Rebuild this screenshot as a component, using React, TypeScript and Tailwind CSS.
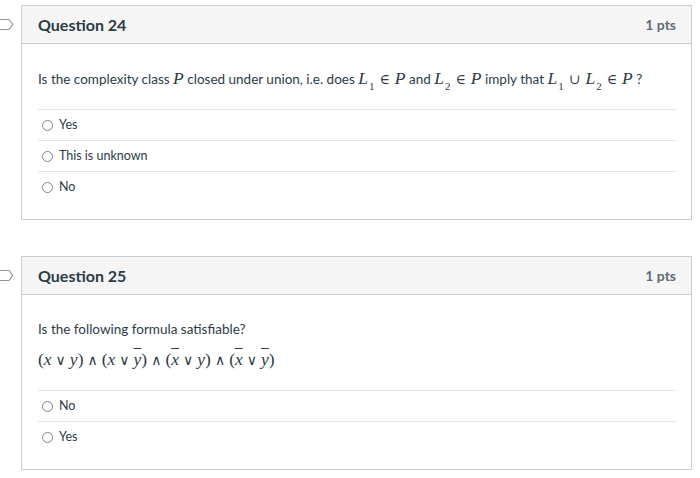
import React from 'react';

const SANS = "font-['Lato','Noto_Sans',sans-serif]";

function Bookmark() {
  return (
    <svg width="14" height="13" viewBox="0 0 14 13" className="block">
      <path d="M-1 1.5 H9 L12.8 6.5 L9 11.5 H-1" fill="none" stroke="#8b969e" strokeWidth="1.2" strokeLinejoin="round" />
    </svg>
  );
}

function V({ children }: { children: React.ReactNode }) {
  return <span className="font-['Liberation_Serif','DejaVu_Serif',serif] italic text-[17.5px]">{children}</span>;
}

function Op({ children }: { children: React.ReactNode }) {
  return <span className="mx-[5px] font-['DejaVu_Serif',serif] text-[14px]">{children}</span>;
}

function Or({ children }: { children: React.ReactNode }) {
  return <span className="mx-[4px] font-['DejaVu_Serif',serif] text-[14px]">{children}</span>;
}

function L({ n }: { n: number }) {
  return (
    <V>
      L<sub className="not-italic text-[11px] align-[-3px] ml-[1px]">{n}</sub>
    </V>
  );
}

function Bar({ c }: { c: string }) {
  return <span className="font-['Liberation_Serif','DejaVu_Serif',serif] italic text-[17.5px] [text-decoration:overline] [text-decoration-thickness:1px]">{c}</span>;
}

function Radio({ label }: { label: string }) {
  return (
    <label className="flex h-[31px] items-center border-t border-[#e4e7e9] pl-[4px]">
      <span className="h-[11px] w-[11px] rounded-full border border-[#7b8690] bg-white" />
      <span className="ml-[6px] text-[12.5px] text-[#2d3b45]">{label}</span>
    </label>
  );
}

function Card({
  title,
  children,
  options,
}: {
  title: string;
  children: React.ReactNode;
  options: string[];
}) {
  return (
    <div className="flex">
      <div className="w-[21px] shrink-0 pt-[13px]">
        <Bookmark />
      </div>
      <div className="flex-1 border border-[#c7cdd1] bg-white">
        <div className="flex h-[38px] items-center justify-between border-b border-[#c7cdd1] bg-[#f5f5f5] pl-[16px] pr-[15px]">
          <h2 className="text-[16px] font-bold text-[#2d3b45]">{title}</h2>
          <span className="text-[14px] font-bold text-[#5f6b73]">1 pts</span>
        </div>
        <div className="pl-[16px] pr-[14px] pt-[24px] pb-[17px]">
          <div className="text-[13.5px] text-[#2d3b45]">{children}</div>
          <div className="mt-[21px]">
            {options.map((o) => (
              <Radio key={o} label={o} />
            ))}
          </div>
        </div>
      </div>
    </div>
  );
}

export default function App() {
  return (
    <div className={`${SANS} min-h-[478px] w-[700px] bg-white pr-[8px] pt-[5px]`}>
      <Card title="Question 24" options={['Yes', 'This is unknown', 'No']}>
        <p className="flex h-[20px] items-center">
          <span>
            Is the complexity class <V>P</V> closed under union, i.e. does <L n={1} />
            <Op>∈</Op>
            <V>P</V> and <L n={2} />
            <Op>∈</Op>
            <V>P</V> imply that <L n={1} />
            <Op>∪</Op>
            <L n={2} />
            <Op>∈</Op>
            <V>P</V> ?
          </span>
        </p>
      </Card>
      <div className="h-[36px]" />
      <Card title="Question 25" options={['No', 'Yes']}>
        <p className="flex h-[20px] items-center">Is the following formula satisfiable?</p>
        <p className="mt-[10px] flex h-[20px] items-center font-['Liberation_Serif','DejaVu_Serif',serif] text-[17.5px]">
          <span>
            (<V>x</V>
            <Or>∨</Or>
            <V>y</V>)<Or>∧</Or>(<V>x</V>
            <Or>∨</Or>
            <Bar c="y" />)<Or>∧</Or>(<Bar c="x" />
            <Or>∨</Or>
            <V>y</V>)<Or>∧</Or>(<Bar c="x" />
            <Or>∨</Or>
            <Bar c="y" />)
          </span>
        </p>
      </Card>
    </div>
  );
}
